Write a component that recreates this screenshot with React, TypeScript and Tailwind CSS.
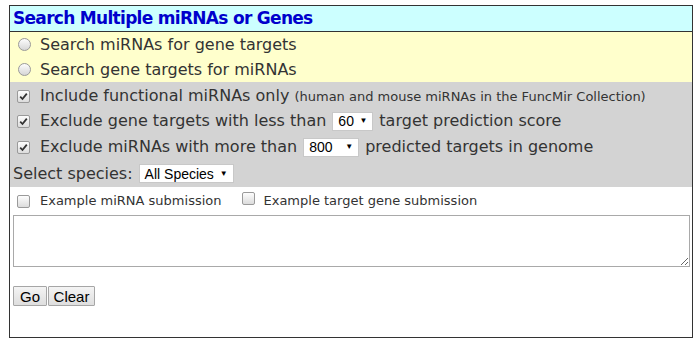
import React from "react";

const Radio = () => (
  <span className="inline-block w-[13px] h-[13px] rounded-full border border-[#9a9a9a] bg-gradient-to-b from-[#fdfdfd] to-[#d6d6d6] shrink-0" />
);

const Check = ({ checked }: { checked?: boolean }) => (
  <span className="inline-flex items-center justify-center w-[13px] h-[13px] rounded-[2px] border border-[#9a9a9a] bg-gradient-to-b from-[#fdfdfd] to-[#dcdcdc] shrink-0">
    {checked && (
      <svg width="9" height="9" viewBox="0 0 9 9">
        <path d="M1.2 4.6 L3.5 7 L7.8 1.6" stroke="#333" strokeWidth="1.8" fill="none" />
      </svg>
    )}
  </span>
);

const Select = ({ value, w }: { value: string; w: string }) => (
  <span
    className={`inline-flex items-center justify-between h-[19px] bg-white border border-[#c8c8c8] pl-[5px] pr-[5px] text-[14px] text-black leading-none ${w}`}
    style={{ fontFamily: '"Liberation Sans", Arial, sans-serif' }}
  >
    <span>{value}</span>
    <span className="text-[8px] ml-[4px]">▼</span>
  </span>
);

export default function App() {
  return (
    <div
      className="w-[698px] h-[343px] bg-white pt-[5px] pl-[9px] text-[#333]"
      style={{ fontFamily: '"DejaVu Sans", Verdana, sans-serif' }}
    >
      <div className="w-[684px] h-[333px] border border-[#333] flex flex-col">
        <div className="h-[26px] bg-[#ccffff] border-b border-[#333] pl-[3px] flex items-center text-[17px] font-bold text-[#0000cc] tracking-[-0.7px]">
          Search Multiple miRNAs or Genes
        </div>
        <div className="bg-[#ffffcc] h-[50px] flex flex-col text-[16px]">
          <div className="h-[25px] flex items-center pl-[8px] gap-[9px]">
            <Radio />
            <span>Search miRNAs for gene targets</span>
          </div>
          <div className="h-[25px] flex items-center pl-[8px] gap-[9px]">
            <Radio />
            <span>Search gene targets for miRNAs</span>
          </div>
        </div>
        <div className="bg-[#d3d3d3] h-[105px] flex flex-col text-[16px]">
          <div className="h-[26px] flex items-center pl-[7px] gap-[10px] pt-[2px]">
            <Check checked />
            <span>
              Include functional miRNAs only <span className="text-[13px]">(human and mouse miRNAs in the FuncMir Collection)</span>
            </span>
          </div>
          <div className="h-[26px] flex items-center pl-[7px] gap-[10px]">
            <Check checked />
            <span className="flex items-center gap-[6px]">
              Exclude gene targets with less than <Select value="60" w="w-[41px]" /> target prediction score
            </span>
          </div>
          <div className="h-[26px] flex items-center pl-[7px] gap-[10px]">
            <Check checked />
            <span className="flex items-center gap-[6px]">
              Exclude miRNAs with more than <Select value="800" w="w-[56px]" /> predicted targets in genome
            </span>
          </div>
          <div className="h-[27px] flex items-center pl-[3px] gap-[6px]">
            <span>Select species:</span>
            <Select value="All Species" w="w-[95px]" />
          </div>
        </div>
        <div className="flex-1 flex flex-col">
          <div className="h-[28px] flex items-center pl-[7px] text-[13px]">
            <Check />
            <span className="ml-[10px]">Example miRNA submission</span>
            <span className="ml-[21px]"><Check /></span>
            <span className="ml-[8px]">Example target gene submission</span>
          </div>
          <div className="pl-[3px] pr-[2px]">
            <textarea className="block w-full h-[52px] border border-[#a9a9a9] resize-y bg-white" />
          </div>
          <div className="pl-[3px] mt-[19px] flex" style={{ fontFamily: '"Liberation Sans", Arial, sans-serif' }}>
            <button className="h-[20px] w-[34px] text-[15px] leading-none text-black border border-[#a6a6a6] bg-gradient-to-b from-[#f4f4f4] to-[#dedede] rounded-[1px]">Go</button>
            <button className="h-[20px] w-[47px] ml-[1px] text-[15px] leading-none text-black border border-[#a6a6a6] bg-gradient-to-b from-[#f4f4f4] to-[#dedede] rounded-[1px]">Clear</button>
          </div>
        </div>
      </div>
    </div>
  );
}
